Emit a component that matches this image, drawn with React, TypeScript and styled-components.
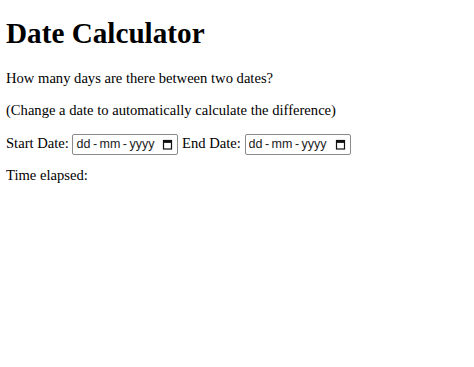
import React, { FC } from "react";
import styled, { createGlobalStyle } from "styled-components";

const GlobalStyle = createGlobalStyle`
	body {
		margin: 6px;
		font-family: "Liberation Serif", "Times New Roman", serif;
		font-size: 14.6px;
		line-height: 17.7px;
		color: #000;
		background: #fff;
	}
`;

const Title = styled.h1`
	font-size: 29.2px;
	line-height: 34px;
	font-weight: bold;
	margin: 10px 0 20px;
`;

const Text = styled.p`
	margin: 14.6px 0;
`;

const Field = styled.span`
	display: inline-flex;
	align-items: center;
	box-sizing: border-box;
	width: 106px;
	height: 21px;
	margin: -2px 0;
	padding: 0 4px 0 3px;
	border: 1px solid #8a8a8a;
	border-radius: 2px;
	vertical-align: middle;
	background: #fff;
`;

const FieldInput = styled.input`
	flex: 1;
	min-width: 0;
	border: none;
	outline: none;
	padding: 0;
	background: transparent;
	font-family: "Liberation Sans", Arial, sans-serif;
	font-size: 12.5px;
	color: #222;

	&::placeholder {
		color: #222;
		opacity: 1;
	}
`;

const CalendarIcon = () => (
	<svg width="11" height="11" viewBox="0 0 11 11" fill="none">
		<rect x="1.5" y="1.5" width="8" height="8.5" stroke="#111" strokeWidth="1.2" />
		<rect x="1.5" y="1.5" width="8" height="2.4" fill="#111" />
	</svg>
);

const DateField: FC = () => (
	<Field>
		<FieldInput type="text" placeholder={"dd\u2009-\u2009mm\u2009-\u2009yyyy"} />
		<CalendarIcon />
	</Field>
);

const App = () => {
	return (
		<>
			<GlobalStyle />
			<Title>Date Calculator</Title>
			<Text>How many days are there between two dates?</Text>
			<Text>(Change a date to automatically calculate the difference)</Text>
			<Text>
				Start Date: <DateField /> End Date: <DateField />
			</Text>
			<Text>Time elapsed:</Text>
		</>
	);
};

export default App;
